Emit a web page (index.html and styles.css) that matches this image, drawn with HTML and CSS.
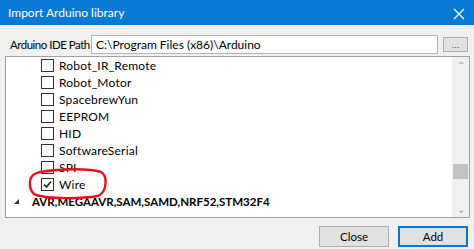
FILE: index.html
```html
<!DOCTYPE html>
<html>
<head>
    <title>Import Arduino library</title>
    <link rel="stylesheet" href="styles.css">
</head>
<body>
    <div class="window">
        <div class="titlebar">
            <span class="title">Import Arduino library</span>
            <svg class="close-x" width="12" height="12" viewBox="0 0 12 12">
                <path d="M1 1 L11 11 M11 1 L1 11" stroke="#fff" stroke-width="1.2"/>
            </svg>
        </div>

        <div class="path-row">
            <label>Arduino IDE Path</label>
            <div class="path-input">C:\Program Files (x86)\Arduino</div>
            <button class="browse">...</button>
        </div>

        <div class="tree">
            <div class="tree-list">
                <div class="item"><span class="box"></span>Robot_IR_Remote</div>
                <div class="item"><span class="box"></span>Robot_Motor</div>
                <div class="item"><span class="box"></span>SpacebrewYun</div>
                <div class="item"><span class="box"></span>EEPROM</div>
                <div class="item"><span class="box"></span>HID</div>
                <div class="item"><span class="box"></span>SoftwareSerial</div>
                <div class="item"><span class="box"></span>SPI</div>
                <div class="item wire">
                    <span class="box checked">
                        <svg width="11" height="11" viewBox="0 0 11 11"><path d="M2 5.5 L4.5 8 L9 2.5" fill="none" stroke="#222" stroke-width="1.6"/></svg>
                    </span>Wire
                    <!-- hand drawn marker on top of the row -->
                    <svg class="scribble" width="82" height="32" viewBox="0 0 82 32">
                        <path d="M18 3 C36 1 62 0 74 4 C81 8 80 24 71 28 C54 31 22 31 9 27 C2 24 1 12 6 7 C10 4 16 3 24 3" fill="none" stroke="#e8101a" stroke-width="2.4" stroke-linecap="round"/>
                    </svg>
                </div>
                <div class="group"><span class="tri"></span>AVR,MEGAAVR,SAM,SAMD,NRF52,STM32F4</div>
            </div>
            <div class="scrollbar">
                <span class="arrow">&#8963;</span>
                <div class="track"><div class="thumb"></div></div>
                <span class="arrow">&#8964;</span>
            </div>
        </div>

        <div class="buttons">
            <button class="btn">Close</button>
            <button class="btn default">Add</button>
        </div>
    </div>
</body>
</html>
```

FILE: styles.css
```css
body { margin: 0; font-family: Lato, "Open Sans", sans-serif; font-size: 11.5px; color: #000; }
.window { width: 474px; height: 249px; background: #f0f0f0; display: flex; flex-direction: column; overflow: hidden; }
.titlebar { height: 25px; background: #0a79d3; color: #fff; display: flex; align-items: center; justify-content: space-between; padding: 0 9px 0 8px; font-size: 12px; flex-shrink: 0; }
.close-x { margin-top: 2px; }
.path-row { display: flex; align-items: center; margin: 10px 6px 0 10px; height: 19px; }
.path-row label { flex: 0 0 81px; white-space: nowrap; letter-spacing: -0.5px; }
.path-input { flex: 1; height: 17px; border: 1px solid #b4b4b4; background: #fff; padding-left: 4px; line-height: 17px; font-size: 12px; }
.browse { flex: 0 0 25px; height: 15px; margin-left: 5px; border: 1px solid #adadad; background: #e1e1e1; font-size: 9px; line-height: 8px; padding: 0; color: #333; }
.tree { margin: 2px 4px 0 5px; height: 160px; border: 1px solid #a0a0a0; background: #fff; display: flex; flex-shrink: 0; }
.tree-list { flex: 1; }
.item { height: 17px; display: flex; align-items: center; padding-left: 35px; position: relative; font-size: 12px; letter-spacing: 0.2px; }
.box { width: 11px; height: 11px; border: 1px solid #333; margin-right: 5px; background: #fff; display: flex; align-items: center; justify-content: center; }
.scribble { position: absolute; left: 21px; top: -8px; }
.group { height: 17px; display: flex; align-items: center; padding-left: 8px; font-weight: bold; }
.tri { width: 0; height: 0; border-left: 5px solid transparent; border-bottom: 5px solid #333; margin-right: 13px; }
.scrollbar { width: 17px; background: #f0f0f0; display: flex; flex-direction: column; align-items: center; color: #999; }
.arrow { height: 16px; font-size: 10px; line-height: 16px; }
.track { flex: 1; width: 100%; position: relative; }
.thumb { position: absolute; left: 1px; right: 1px; top: 91px; height: 15px; background: #c2c2c2; }
.buttons { display: flex; justify-content: flex-end; gap: 9px; margin: 8px 6px 0 0; }
.btn { width: 70px; height: 21px; border: 1px solid #adadad; background: #e1e1e1; font-family: inherit; font-size: 11.5px; padding: 0; }
.btn.default { border: 2px solid #0078d7; }
```
